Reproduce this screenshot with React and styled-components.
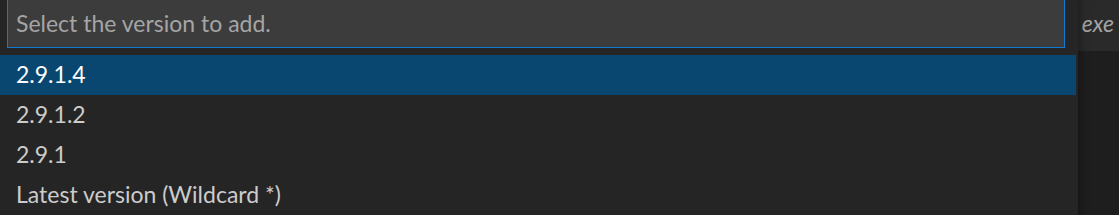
import React from "react";
import styled, { createGlobalStyle } from "styled-components";

const GlobalStyle = createGlobalStyle`
  html, body {
    margin: 0;
    padding: 0;
    background: #1e1e1e;
    overflow: hidden;
  }
  #root {
    width: 1119px;
    height: 215px;
  }
`;

const Workbench = styled.div`
  position: relative;
  width: 1119px;
  height: 215px;
  background: #1e1e1e;
  font-family: Lato, "Noto Sans", sans-serif;
  overflow: hidden;
`;

const TabStrip = styled.div`
  height: 51px;
  background: #2a2a2a;
  display: flex;
  justify-content: flex-end;
  align-items: center;
  padding-right: 5px;
`;

const TabLabel = styled.span`
  font-style: italic;
  font-size: 23px;
  color: #a3a3a3;
  padding-bottom: 6px;
`;

const QuickPick = styled.div`
  position: absolute;
  left: 0;
  top: 0;
  width: 1078px;
  background: #252526;
  box-shadow: 0 0 8px 2px rgba(0, 0, 0, 0.36);
`;

const InputWrap = styled.div`
  padding: 0 13px 7px 7px;
`;

const Input = styled.div`
  height: 48px;
  box-sizing: border-box;
  background: #3c3c3c;
  border: 1px solid #0e7ad1;
  border-top: none;
  display: flex;
  align-items: center;
  padding-left: 8px;
  padding-bottom: 2px;
  font-size: 23px;
  color: #a5a5a5;
`;

const List = styled.div`
  display: flex;
  flex-direction: column;
`;

const Row = styled.div`
  height: 40px;
  margin-right: 2px;
  display: flex;
  align-items: center;
  padding-left: 16px;
  padding-bottom: 2px;
  box-sizing: border-box;
  font-size: 23px;
  color: ${(p) => (p.$selected ? "#ffffff" : "#cccccc")};
  background: ${(p) => (p.$selected ? "#094771" : "transparent")};
`;

const versions = ["2.9.1.4", "2.9.1.2", "2.9.1", "Latest version (Wildcard *)"];

export default function App() {
  return (
    <Workbench>
      <GlobalStyle />
      <TabStrip>
        <TabLabel>exe</TabLabel>
      </TabStrip>
      <QuickPick>
        <InputWrap>
          <Input>Select the version to add.</Input>
        </InputWrap>
        <List>
          {versions.map((v, i) => (
            <Row key={v} $selected={i === 0}>
              {v}
            </Row>
          ))}
        </List>
      </QuickPick>
    </Workbench>
  );
}
